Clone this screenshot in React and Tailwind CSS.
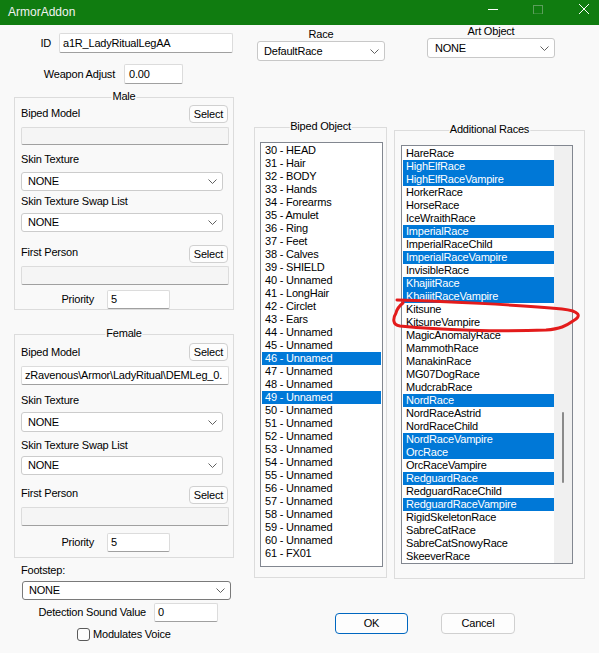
import React from 'react';

const bipedItems = [
  '30 - HEAD', '31 - Hair', '32 - BODY', '33 - Hands', '34 - Forearms', '35 - Amulet',
  '36 - Ring', '37 - Feet', '38 - Calves', '39 - SHIELD', '40 - Unnamed', '41 - LongHair',
  '42 - Circlet', '43 - Ears', '44 - Unnamed', '45 - Unnamed', '46 - Unnamed', '47 - Unnamed',
  '48 - Unnamed', '49 - Unnamed', '50 - Unnamed', '51 - Unnamed', '52 - Unnamed', '53 - Unnamed',
  '54 - Unnamed', '55 - Unnamed', '56 - Unnamed', '57 - Unnamed', '58 - Unnamed', '59 - Unnamed',
  '60 - Unnamed', '61 - FX01',
];
const bipedSelected = ['46 - Unnamed', '49 - Unnamed'];

const races = [
  ['HareRace', false], ['HighElfRace', true], ['HighElfRaceVampire', true], ['HorkerRace', false],
  ['HorseRace', false], ['IceWraithRace', false], ['ImperialRace', true], ['ImperialRaceChild', false],
  ['ImperialRaceVampire', true], ['InvisibleRace', false], ['KhajiitRace', true], ['KhajiitRaceVampire', true],
  ['Kitsune', false], ['KitsuneVampire', false], ['MagicAnomalyRace', false], ['MammothRace', false],
  ['ManakinRace', false], ['MG07DogRace', false], ['MudcrabRace', false], ['NordRace', true],
  ['NordRaceAstrid', false], ['NordRaceChild', false], ['NordRaceVampire', true], ['OrcRace', true],
  ['OrcRaceVampire', false], ['RedguardRace', true], ['RedguardRaceChild', false], ['RedguardRaceVampire', true],
  ['RigidSkeletonRace', false], ['SabreCatRace', false], ['SabreCatSnowyRace', false], ['SkeeverRace', false],
];

const Chevron = () => (
  <svg width="9" height="5" viewBox="0 0 9 5" className="shrink-0">
    <path d="M0.5 0.5 L4.5 4.5 L8.5 0.5" fill="none" stroke="#606060" strokeWidth="1" />
  </svg>
);

const Combo = ({ value, className = '' }) => (
  <div className={`flex items-center justify-between bg-white border rounded-[3px] pl-[6px] pr-[5px] ${className}`}>
    <span>{value}</span>
    <Chevron />
  </div>
);

const Edit = ({ value = '', className = '', disabled = false }) => (
  <div
    className={`flex items-center overflow-hidden whitespace-nowrap border border-[#dcdcdc] border-b-[#a0a0a0] rounded-[2px] pl-[3px] ${
      disabled ? 'bg-[#f5f5f5]' : 'bg-white'
    } ${className}`}
  >
    {value}
  </div>
);

const Btn = ({ children, className = '' }) => (
  <div className={`flex items-center justify-center bg-[#fdfdfd] border rounded-[4px] ${className}`}>
    {children}
  </div>
);

const Group = ({ title, className = '', children }) => (
  <div className={`relative border border-[#dcdcdc] ${className}`}>
    <span className="absolute left-1/2 -translate-x-1/2 -top-[8px] bg-[#f9f9f9] px-[1px] whitespace-nowrap">
      {title}
    </span>
    {children}
  </div>
);

// one gender block (Male / Female)
const GenderGroup = ({ title, path, first, className }) => (
  <Group title={title} className={`w-[220px] pl-[6px] pr-[5px] flex flex-col ${className}`}>
    <div className={`flex justify-between ${first.row1}`}>
      <span className={first.labelPad}>Biped Model</span>
      <Btn className="w-[39px] h-[18px] border-[#d0d0d0]">Select</Btn>
    </div>
    <Edit value={path} disabled={!path} className={`w-[208px] ${first.field1}`} />
    <span className={first.skin}>Skin Texture</span>
    <Combo value="NONE" className={`w-[202px] border-[#cccccc] ${first.combo1}`} />
    <span className={first.swap}>Skin Texture Swap List</span>
    <Combo value="NONE" className={`w-[202px] border-[#cccccc] ${first.combo2}`} />
    <div className={`flex justify-between ${first.row2}`}>
      <span className="pt-[1px]">First Person</span>
      <Btn className="w-[39px] h-[18px] border-[#d0d0d0]">Select</Btn>
    </div>
    <Edit disabled className="w-[208px] h-[19px] mt-[3px]" />
    <div className={`flex items-center h-[19px] ${first.prio}`}>
      <span className="w-[73px] text-right">Priority</span>
      <Edit value="5" className="ml-[13px] w-[63px] h-[19px]" />
    </div>
  </Group>
);

const App = () => {
  return (
    <div className="relative w-[599px] h-[653px] overflow-hidden bg-[#f9f9f9] text-black font-['Liberation_Sans',Arial,sans-serif] text-[11px] leading-[13px] tracking-[-0.2px]">
      {/* Title bar */}
      <div className="h-[25px] bg-[#107c10] flex items-start">
        <span className="pl-[8px] pt-[5px] text-[12px] leading-[14px] tracking-normal text-[#f2f2f2]">ArmorAddon</span>
        <div className="ml-auto flex items-start pt-[4px] pr-[10px]">
          <svg width="10" height="10" viewBox="0 0 10 10">
            <path d="M0 5.5 H10" stroke="#ffffff" strokeWidth="1" />
          </svg>
          <svg width="10" height="10" viewBox="0 0 10 10" className="ml-[35px]">
            <rect x="0.5" y="1.5" width="9" height="8.5" fill="none" stroke="#5c9e5c" strokeWidth="1" />
          </svg>
          <svg width="10" height="10" viewBox="0 0 10 10" className="ml-[36px]">
            <path d="M0 0 L10 10 M10 0 L0 10" stroke="#ffffff" strokeWidth="1" />
          </svg>
        </div>
      </div>

      {/* Body */}
      <div className="flex">
        {/* Left column */}
        <div className="w-[254px] shrink-0 pl-[14px] flex flex-col">
          <div className="flex items-center h-[20px] mt-[8px]">
            <span className="w-[37px] text-right">ID</span>
            <Edit value="a1R_LadyRitualLegAA" className="ml-[8px] w-[174px] h-[20px]" />
          </div>
          <div className="flex items-center h-[20px] mt-[11px]">
            <span className="w-[101px] text-right">Weapon Adjust</span>
            <Edit value="0.00" className="ml-[9px] w-[59px] h-[20px] pl-[4px]" />
          </div>

          <GenderGroup
            title="Male"
            className="mt-[13px]"
            first={{
              row1: 'mt-[7px]',
              labelPad: 'pt-[2px]',
              field1: 'h-[18px] mt-[4px]',
              skin: 'mt-[8px]',
              combo1: 'h-[19px] mt-[6px]',
              swap: 'mt-[4px]',
              combo2: 'h-[19px] mt-[5px]',
              row2: 'mt-[13px]',
              prio: 'mt-[5px]',
            }}
          />

          <GenderGroup
            title="Female"
            path="zRavenous\Armor\LadyRitual\DEMLeg_0."
            className="mt-[24px] pb-[5px]"
            first={{
              row1: 'mt-[8px]',
              labelPad: 'pt-[3px]',
              field1: 'h-[19px] mt-[5px]',
              skin: 'mt-[9px]',
              combo1: 'h-[20px] mt-[5px]',
              swap: 'mt-[7px]',
              combo2: 'h-[19px] mt-[4px]',
              row2: 'mt-[11px]',
              prio: 'mt-[7px]',
            }}
          />

          <span className="mt-[6px] ml-[7px]">Footstep:</span>
          <Combo value="NONE" className="mt-[4px] ml-[8px] w-[209px] h-[19px] border-[#7a7a7a]" />
          <div className="flex items-center h-[19px] mt-[3px]">
            <span className="w-[132px] text-right">Detection Sound Value</span>
            <Edit value="0" className="ml-[8px] w-[64px] h-[19px]" />
          </div>
          <div className="flex items-center h-[14px] mt-[5px]">
            <div className="ml-[63px] w-[13px] h-[13px] rounded-[3px] border border-[#5a5a5a] bg-[#fdfdfd]" />
            <span className="ml-[3px]">Modulates Voice</span>
          </div>
        </div>

        {/* Right part */}
        <div className="flex flex-col">
          <div className="flex items-start">
            <div className="ml-[3px] w-[128px] pt-[3px] flex flex-col items-center">
              <span>Race</span>
              <Combo value="DefaultRace" className="w-full h-[20px] border-[#c8c8c8] pl-[5px]" />
            </div>
            <div className="ml-[42px] w-[128px] flex flex-col items-center">
              <span>Art Object</span>
              <Combo value="NONE" className="w-full h-[20px] border-[#c8c8c8] pl-[7px]" />
            </div>
          </div>

          <div className="flex items-start">
            <Group title="Biped Object" className="mt-[66px] w-[133px] pt-[14px] pl-[5px] pr-[3px] pb-[10px]">
              <div className="w-[123px] h-[425px] bg-white border border-[#828790] pt-[1px] px-[1px] overflow-hidden">
                {bipedItems.map(item => {
                  const sel = bipedSelected.includes(item);
                  return (
                    <div
                      key={item}
                      className={`h-[13px] pl-[3px] whitespace-nowrap ${sel ? 'bg-[#0078d7] text-white' : ''}`}
                    >
                      {item}
                    </div>
                  );
                })}
              </div>
            </Group>

            <Group title="Additional Races" className="ml-[7px] mt-[69px] w-[191px] pt-[14px] pl-[6px] pb-[14px]">
              <div className="w-[172px] h-[419px] bg-white border border-[#828790] flex overflow-hidden">
                <div className="w-[152px] pt-[1px] pl-[1px]">
                  {races.map(([name, sel]) => (
                    <div
                      key={name}
                      className={`h-[13px] pl-[3px] whitespace-nowrap ${sel ? 'bg-[#0078d7] text-white' : ''}`}
                    >
                      {name}
                    </div>
                  ))}
                </div>
                {/* scrollbar */}
                <div className="w-[18px] bg-[#f0f0f0] pt-[266px] pl-[8px]">
                  <div className="w-[2px] h-[71px] rounded-full bg-[#8a8a8a]" />
                </div>
              </div>
            </Group>
          </div>

          <div className="flex mt-[34px]">
            <Btn className="ml-[81px] w-[73px] h-[21px] border-[#0067c0]">OK</Btn>
            <Btn className="ml-[33px] w-[74px] h-[21px] border-[#d0d0d0]">Cancel</Btn>
          </div>
        </div>
      </div>

      {/* red marker annotation */}
      <svg width="599" height="653" className="absolute left-0 top-0 pointer-events-none">
        <path
          d="M397 300 C440 301 520 305 562 309 C580 311 582 316 573 321 C566 326 560 329 546 330 C500 332 440 330 400 326 C392 325 393 318 396 313 C397 309 399 306 403 303"
          fill="none"
          stroke="#e31b1b"
          strokeWidth="3"
          strokeLinecap="round"
          strokeLinejoin="round"
        />
      </svg>
    </div>
  );
};

export default App;
